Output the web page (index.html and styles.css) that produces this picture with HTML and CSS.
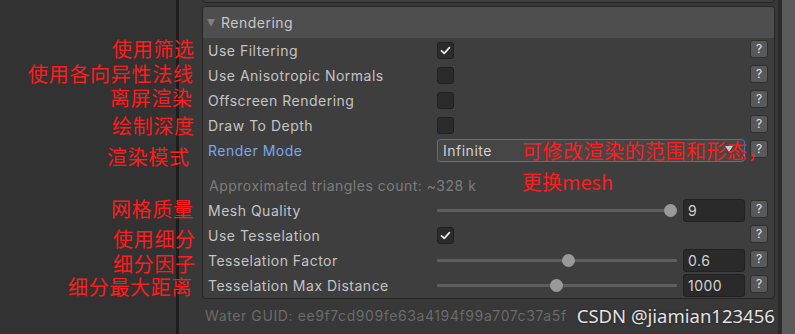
FILE: index.html
```html
<!DOCTYPE html>
<html lang="zh">
<head>
<meta charset="utf-8">
<title>Rendering</title>
<link rel="stylesheet" href="styles.css">
</head>
<body>
<div class="page">
  <div class="left"></div>
  <div class="divider"></div>
  <div class="inspector">
    <div class="prev-box"></div>
    <div class="panel">
      <div class="panel-header">
        <span class="fold"></span>
        <span class="title">Rendering</span>
      </div>
      <div class="row">
        <span class="label">Use Filtering</span>
        <span class="control"><span class="checkbox checked"><svg viewBox="0 0 17 17" width="17" height="17"><path d="M4.5 8.8 L7.3 11.4 L12.4 5.6" fill="none" stroke="#e6e6e6" stroke-width="1.8" stroke-linecap="round" stroke-linejoin="round"/></svg></span></span>
        <span class="help">?</span>
      </div>
      <div class="row">
        <span class="label">Use Anisotropic Normals</span>
        <span class="control"><span class="checkbox"></span></span>
        <span class="help">?</span>
      </div>
      <div class="row">
        <span class="label">Offscreen Rendering</span>
        <span class="control"><span class="checkbox"></span></span>
        <span class="help">?</span>
      </div>
      <div class="row">
        <span class="label">Draw To Depth</span>
        <span class="control"><span class="checkbox"></span></span>
        <span class="help">?</span>
      </div>
      <div class="row">
        <span class="label link">Render Mode</span>
        <span class="control"><span class="dropdown"><span class="dd-text">Infinite</span><span class="dd-arrow"></span></span></span>
        <span class="help">?</span>
      </div>
      <div class="row info-row">
        <span class="info">Approximated triangles count: ~328 k</span>
      </div>
      <div class="row">
        <span class="label">Mesh Quality</span>
        <span class="control slider-control">
          <span class="slider"><span class="track"></span><span class="thumb" style="left: 100%"></span></span>
          <span class="num">9</span>
        </span>
        <span class="help">?</span>
      </div>
      <div class="row">
        <span class="label">Use Tesselation</span>
        <span class="control"><span class="checkbox checked"><svg viewBox="0 0 17 17" width="17" height="17"><path d="M4.5 8.8 L7.3 11.4 L12.4 5.6" fill="none" stroke="#e6e6e6" stroke-width="1.8" stroke-linecap="round" stroke-linejoin="round"/></svg></span></span>
        <span class="help">?</span>
      </div>
      <div class="row">
        <span class="label">Tesselation Factor</span>
        <span class="control slider-control">
          <span class="slider"><span class="track"></span><span class="thumb" style="left: 57.7%"></span></span>
          <span class="num">0.6</span>
        </span>
        <span class="help">?</span>
      </div>
      <div class="row">
        <span class="label">Tesselation Max Distance</span>
        <span class="control slider-control">
          <span class="slider"><span class="track"></span><span class="thumb" style="left: 52.3%"></span></span>
          <span class="num">1000</span>
        </span>
        <span class="help">?</span>
      </div>
    </div>
    <div class="footer">
      <span class="guid">Water GUID: ee9f7cd909fe63a4194f99a707c37a5f</span>
      <span class="watermark">CSDN @jiamian123456</span>
    </div>
  </div>
  <div class="gutter"></div>
  <div class="scrollbar"></div>

  <div class="notes">
    <span class="note n1">使用筛选</span>
    <span class="note n2">使用各向异性法线</span>
    <span class="note n3">离屏渲染</span>
    <span class="note n4">绘制深度</span>
    <span class="note n5">渲染模式</span>
    <span class="note n6">网格质量</span>
    <span class="note n7">使用细分</span>
    <span class="note n8">细分因子</span>
    <span class="note n9">细分最大距离</span>
    <span class="note n10">可修改渲染的范围和形态，</span>
    <span class="note n11">更换mesh</span>
  </div>
</div>
</body>
</html>
```

FILE: styles.css
```css
* { box-sizing: border-box; }
html, body {
  margin: 0;
  padding: 0;
  width: 795px;
  height: 334px;
  overflow: hidden;
  background: #383838;
}
.page {
  position: relative;
  display: flex;
  width: 795px;
  height: 334px;
  font-family: Inter, "Noto Sans", sans-serif;
  font-size: 14px;
  letter-spacing: 0.5px;
  color: #c4c4c4;
}
.left {
  width: 176px;
  flex: none;
  background: #323232;
}
.divider {
  width: 3px;
  flex: none;
  background: #1d1d1d;
}
.inspector {
  flex: 1;
  min-width: 0;
  display: flex;
  flex-direction: column;
  padding: 0 3px 0 23px;
  background: #383838;
}
.prev-box {
  height: 6px;
  margin-top: -3px;
  margin-bottom: 3px;
  background: #3e3e3e;
  border: 1px solid #262626;
  border-radius: 0 0 4px 4px;
}
.panel {
  border: 1px solid #262626;
  border-radius: 4px;
  background: #3e3e3e;
  overflow: hidden;
}
.panel-header {
  height: 31px;
  display: flex;
  align-items: center;
  background: #4e4e4e;
  padding-left: 4px;
}
.fold {
  width: 0;
  height: 0;
  border-left: 4.5px solid transparent;
  border-right: 4.5px solid transparent;
  border-top: 8px solid #7f7f7f;
  margin-right: 6px;
  margin-top: 1px;
}
.title {
  color: #c8c8c8;
}
.row {
  height: 25px;
  display: flex;
  align-items: center;
  padding-left: 5px;
  padding-right: 6px;
}
.label {
  width: 229px;
  flex: none;
  white-space: nowrap;
}
.label.link { color: #7aa6ef; }
.control {
  flex: 1;
  display: flex;
  align-items: center;
}
.checkbox {
  width: 17px;
  height: 17px;
  background: #2b2b2b;
  border: 1px solid #1f1f1f;
  border-radius: 3px;
  position: relative;
  display: block;
}
.checkbox svg {
  position: absolute;
  left: -1px;
  top: -1px;
}
.help {
  width: 18px;
  height: 18px;
  flex: none;
  margin-left: 5px;
  margin-bottom: 3px;
  background: #595959;
  border: 1px solid #2f2f2f;
  border-radius: 3px;
  color: #e2e2e2;
  font-size: 12px;
  letter-spacing: 0;
  display: flex;
  align-items: center;
  justify-content: center;
  line-height: 1;
}
.dropdown {
  width: 308px;
  height: 23px;
  display: flex;
  align-items: center;
  justify-content: space-between;
  border: 1px solid #3b78b8;
  border-radius: 3px;
  background: #464646;
  padding: 0 5px 0 5px;
  color: #d2d2d2;
}
.dd-arrow {
  width: 0;
  height: 0;
  border-left: 4px solid transparent;
  border-right: 4px solid transparent;
  border-top: 6px solid #c8c8c8;
  margin-right: 6px;
  margin-top: -3px;
}
.info-row {
  height: 25px;
  margin-top: 10px;
  padding-left: 6px;
}
.info { color: #7d7d7d; white-space: nowrap; }
.slider-control { gap: 6px; }
.slider {
  width: 240px;
  height: 13px;
  position: relative;
  display: block;
  flex: none;
}
.track {
  position: absolute;
  left: 0;
  right: 0;
  top: 5px;
  height: 3px;
  background: #5e5e5e;
  border-radius: 1px;
}
.thumb {
  position: absolute;
  top: 0;
  width: 13px;
  height: 13px;
  margin-left: -13px;
  border-radius: 50%;
  background: #999999;
}
.num {
  width: 62px;
  height: 23px;
  flex: none;
  background: #2a2a2a;
  border: 1px solid #212121;
  border-radius: 3px;
  color: #d2d2d2;
  display: flex;
  align-items: center;
  padding-left: 4px;
}
.footer {
  display: flex;
  align-items: center;
  height: 30px;
  padding-left: 3px;
  margin-top: 1px;
  min-width: 0;
  overflow: visible;
}
.guid {
  color: #6b6b6b;
  white-space: nowrap;
  letter-spacing: 0.6px;
  flex: none;
}
.watermark {
  flex: none;
  margin-left: 10px;
  font-family: "Noto Sans", "Liberation Sans", sans-serif;
  font-size: 18.5px;
  letter-spacing: 0;
  color: #e2e2e2;
  text-shadow: 0 0 2px #1a1a1a;
  white-space: nowrap;
  position: relative;
  z-index: 2;
}
.gutter {
  width: 4px;
  flex: none;
  background: #2b2b2b;
}
.scrollbar {
  width: 13px;
  flex: none;
  background: #5a5a5a;
}
.notes {
  position: absolute;
  left: 0;
  top: 0;
  width: 795px;
  height: 334px;
  pointer-events: none;
}
.note {
  position: absolute;
  font-family: "Noto Sans CJK SC", "Noto Sans", sans-serif;
  font-size: 20px;
  line-height: 20px;
  letter-spacing: 0.7px;
  color: #ff1c1c;
  white-space: nowrap;
}
.n1 { left: 112px; top: 39px; }
.n2 { left: 28px; top: 64px; }
.n3 { left: 110px; top: 88px; }
.n4 { left: 112px; top: 116px; }
.n5 { left: 107px; top: 147px; }
.n6 { left: 111px; top: 199px; }
.n7 { left: 113px; top: 229px; }
.n8 { left: 113px; top: 254px; }
.n9 { left: 68px; top: 277px; }
.n10 { left: 522px; top: 141px; letter-spacing: 0.5px; }
.n11 { left: 522px; top: 172px; letter-spacing: 0; }
```
